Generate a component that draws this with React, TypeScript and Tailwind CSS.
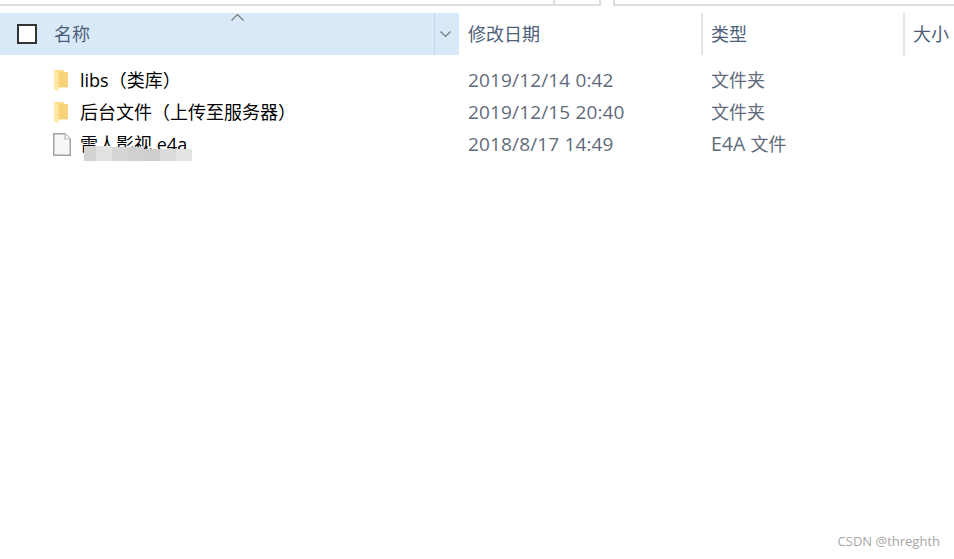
import React from "react";

const font = { fontFamily: '"Open Sans", "Noto Sans CJK SC", sans-serif' };

function FolderIcon() {
  return (
    <svg width="15" height="21" viewBox="0 0 15 21" className="ml-[1px] shrink-0">
      <path d="M0 0H9L11 2H14V17.5H4V20.5L0 19Z" fill="#fbdc84" />
      <path d="M4.5 3H14V17H4.5Z" fill="#f7d27a" />
      <path d="M0 0L4.5 3V20.5L0 19Z" fill="#ffe9a6" />
    </svg>
  );
}

function FileIcon() {
  return (
    <svg width="18" height="23" viewBox="0 0 18 23" className="shrink-0">
      <path d="M0.75 0.75H12L17.25 6V22.25H0.75Z" fill="#f6f7f9" stroke="#a3a3a3" strokeWidth="1.5" />
      <path d="M12 0.75V6H17.25" fill="#ffffff" stroke="#b5b5b5" strokeWidth="1.2" />
    </svg>
  );
}

const rows = [
  { name: "libs（类库）", date: "2019/12/14 0:42", type: "文件夹", icon: "folder" },
  { name: "后台文件（上传至服务器）", date: "2019/12/15 20:40", type: "文件夹", icon: "folder" },
  { name: "雷人影视.e4a", date: "2018/8/17 14:49", type: "E4A 文件", icon: "file" },
];

// smudged patches over the third file name
const patches = [
  "w-[12px] h-[15px] bg-[#d3d3d3]",
  "w-[16px] h-[15px] bg-[#e2e2e2]",
  "w-[16px] h-[14px] bg-[#d6d6d6] mt-[1px]",
  "w-[16px] h-[14px] bg-[#d0d0d0] mt-[1px]",
  "w-[16px] h-[12px] bg-[#cfcfcf] mt-[3px]",
  "w-[16px] h-[12px] bg-[#dcdcdc] mt-[3px]",
  "w-[16px] h-[12px] bg-[#e3e3e3] mt-[3px]",
];

export default function App() {
  return (
    <div className="relative h-[559px] w-[954px] overflow-hidden bg-white" style={font}>
      {/* leftover toolbar edge */}
      <div className="flex h-[6px]">
        <div className="flex w-[601px] justify-end border-r-2 border-b-2 border-[#dedede]">
          <div className="w-[46px] border-l-2 border-[#dedede]" />
        </div>
        <div className="ml-[12px] flex-1 border-b-2 border-l-2 border-[#dedede]" />
      </div>

      {/* column headers */}
      <div className="mt-[7px] flex h-[42px] text-[18px] text-[#4c607a]">
        <div className="relative flex w-[459px] items-center bg-[#d9e9f8]">
          <div className="ml-[17px] h-[20px] w-[20px] border-2 border-[#333333] bg-white" />
          <span className="ml-[17px] flex-1">名称</span>
          <div className="flex h-full w-[25px] items-center justify-center border-l border-[#c4d6e6] pr-[4px]">
            <svg width="11" height="7" viewBox="0 0 11 7">
              <path d="M0.5 0.5L5.5 5.5L10.5 0.5" fill="none" stroke="#6d7580" strokeWidth="1.1" />
            </svg>
          </div>
          <svg width="13" height="7" viewBox="0 0 13 7" className="absolute top-[1px] left-[231px]">
            <path d="M0.5 6.5L6.5 0.5L12.5 6.5" fill="none" stroke="#7a7a7a" strokeWidth="1.2" />
          </svg>
        </div>
        <div className="flex w-[242px] items-center pl-[9px]">修改日期</div>
        <div className="flex w-[202px] items-center border-l-2 border-[#e5e5e5] pl-[8px]">类型</div>
        <div className="flex flex-1 items-center overflow-hidden border-l-2 border-[#e5e5e5] pl-[8px] whitespace-nowrap">大小</div>
      </div>

      {/* file rows */}
      <div className="mt-[9px] text-[18px]">
        {rows.map((row) => (
          <div key={row.name} className="flex h-[32px] items-center">
            <div className="flex w-[459px] items-center">
              <div className="ml-[53px] flex w-[27px] items-center">
                {row.icon === "folder" ? <FolderIcon /> : <FileIcon />}
              </div>
              <span className="text-black">{row.name}</span>
            </div>
            <div className="w-[243px] pl-[9px] text-[19px] tracking-[0.15px] text-[#5f6b7a]">{row.date}</div>
            <div className="pl-[9px] text-[#5f6b7a]">
              {row.type.startsWith("E4A") ? (
                <>
                  <span className="text-[19.5px]">E4A </span>文件
                </>
              ) : (
                row.type
              )}
            </div>
          </div>
        ))}
      </div>

      <div className="absolute top-[146px] left-[84px] flex h-[15px]">
        {patches.map((p) => (
          <div key={p} className={p} />
        ))}
      </div>

      <div className="absolute right-[14px] bottom-[8px] text-[13px] text-[#a6a6a6]">CSDN @threghth</div>
    </div>
  );
}
